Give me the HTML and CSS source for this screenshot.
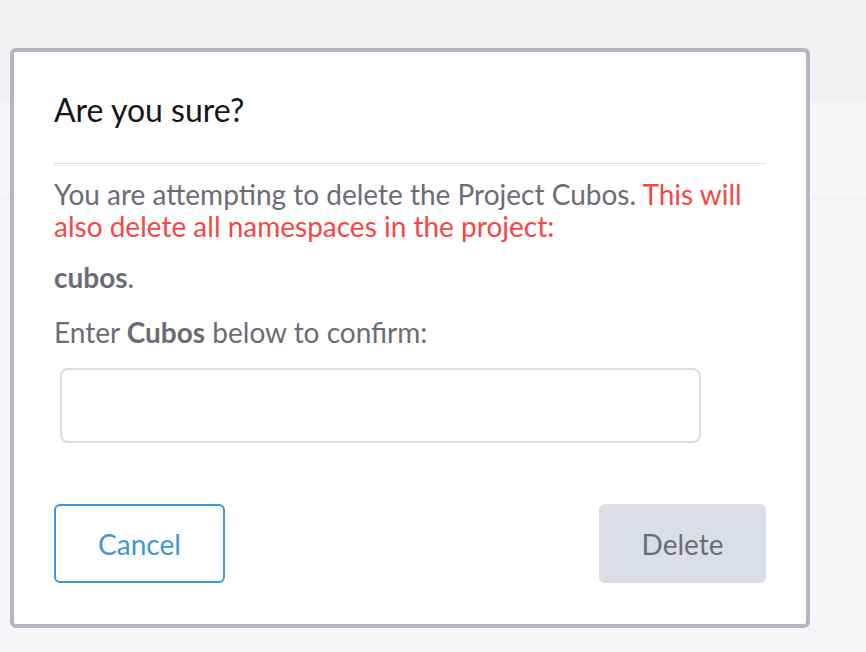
FILE: index.html
```html
<!DOCTYPE html>
<html lang="en">
<head>
<meta charset="utf-8">
<title>Are you sure?</title>
<link rel="stylesheet" href="styles.css">
</head>
<body>
<div class="page">
  <div class="topbar"></div>
  <div class="section"></div>
</div>
<div class="modal">
  <div class="card">
    <div class="card-header">
      <h2 class="title">Are you sure?</h2>
    </div>
    <div class="card-body">
      <p class="text intro">You are attempting to delete the Project Cubos. <span class="danger">This will also delete all namespaces in the project:</span></p>
      <p class="text names"><b>cubos</b>.</p>
      <p class="text">Enter <b>Cubos</b> below to confirm:</p>
      <input class="confirm-input" type="text" aria-label="Confirm">
    </div>
    <div class="card-actions">
      <button class="btn btn-outline" type="button">Cancel</button>
      <button class="btn btn-disabled" type="button">Delete</button>
    </div>
  </div>
</div>
</body>
</html>
```

FILE: styles.css
```css
* { box-sizing: border-box; }
html, body { margin: 0; padding: 0; }
body {
  background: #f6f6f9;
  font-family: Lato, "Open Sans", "Liberation Sans", sans-serif;
  width: 866px;
  height: 652px;
  overflow: hidden;
  position: relative;
}
.topbar { height: 101px; background: #f3f3f5; }
.section { height: 98px; border-bottom: 1px solid #ececf0; }

.modal {
  position: absolute;
  left: 10px;
  top: 48px;
  width: 800px;
  height: 580px;
}
.card {
  height: 100%;
  background: #fff;
  border: 4px solid #b6b6c3;
  border-radius: 6px;
  padding: 0 40px 41px;
  display: flex;
  flex-direction: column;
}
.card-header {
  padding-top: 39px;
  padding-bottom: 34px;
  border-bottom: 1px solid #dcdee7;
}
.title {
  margin: 0;
  font-size: 32px;
  line-height: 1.2;
  font-weight: 400;
  color: #141419;
}
.card-body { padding-top: 14px; }
.text {
  margin: 0;
  font-size: 28px;
  line-height: 32px;
  color: #6c6c76;
}
.intro { margin-bottom: 18.5px; }
.names { margin-bottom: 23.5px; }
.text b { font-weight: 700; }
.danger { color: #f64747; }
.confirm-input {
  display: block;
  margin: 20px 0 0 6px;
  width: 641px;
  height: 75px;
  border: 2px solid #dcdde7;
  border-radius: 8px;
  background: #fff;
  outline: none;
}
.card-actions {
  margin-top: auto;
  display: flex;
  justify-content: space-between;
  align-items: flex-end;
}
.btn {
  font-family: inherit;
  font-size: 28px;
  height: 79px;
  border-radius: 6px;
  padding: 0;
  cursor: pointer;
}
.btn-outline {
  width: 171px;
  background: #fff;
  border: 2px solid #3d98d3;
  color: #3d98d3;
}
.btn-disabled {
  width: 167px;
  background: #dcdee7;
  border: none;
  color: #6c6c76;
}
```
